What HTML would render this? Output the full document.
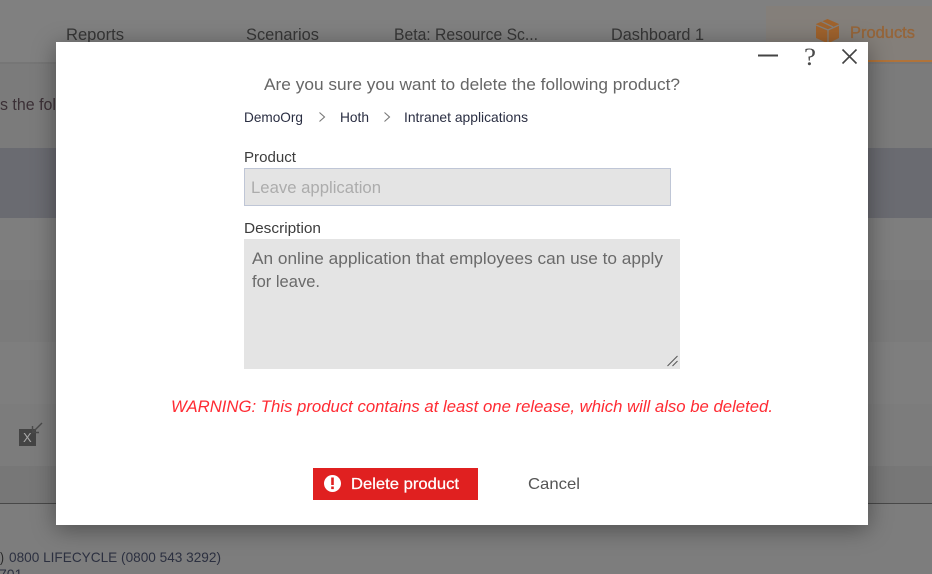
<!DOCTYPE html>
<html lang="en">
<head>
<meta charset="utf-8">
<title>Delete product</title>
<style>
html,body{margin:0;padding:0;width:932px;height:574px;overflow:hidden;background:#7e7e7e}
body{position:relative;font-family:"Liberation Sans",sans-serif}
.b{position:absolute;left:0;width:932px}
#modal{position:absolute;left:56px;top:42px;width:812px;height:483px;background:#fff;box-shadow:0 4px 22px rgba(0,0,0,.38)}
svg{position:absolute;left:0;top:0}
text{font-family:"Liberation Sans",sans-serif}
</style>
</head>
<body>
<div class="b" style="top:0;height:62px;background:#808080"></div>
<div class="b" style="top:62px;height:2px;background:#767676"></div>
<div class="b" style="top:64px;height:84px;background:#7b7b7b"></div>
<div class="b" style="top:148px;height:70px;background:#6a6b71"></div>
<div class="b" style="top:218px;height:62px;background:#7e7e7e"></div>
<div class="b" style="top:280px;height:62px;background:#7b7b7b"></div>
<div class="b" style="top:342px;height:62px;background:#7e7e7e"></div>
<div class="b" style="top:404px;height:62px;background:#7c7c7c"></div>
<div class="b" style="top:466px;height:37px;background:#777"></div>
<div class="b" style="top:503px;height:1px;background:#484848"></div>
<div class="b" style="top:504px;height:70px;background:#7d7d7d"></div>
<div style="position:absolute;left:766px;top:6px;width:166px;height:54px;background:#847f7a"></div>
<div style="position:absolute;left:766px;top:60px;width:166px;height:2px;background:#b0733a"></div>

<svg width="932" height="574" viewBox="0 0 932 574">
  <g fill="#363636" font-size="17">
    <text x="66" y="40" textLength="58" lengthAdjust="spacingAndGlyphs">Reports</text>
    <text x="246" y="40" textLength="73" lengthAdjust="spacingAndGlyphs">Scenarios</text>
    <text x="394" y="40" textLength="144" lengthAdjust="spacingAndGlyphs">Beta: Resource Sc...</text>
    <text x="611" y="40" textLength="93" lengthAdjust="spacingAndGlyphs">Dashboard 1</text>
  </g>
  <text x="850" y="38" font-size="17" fill="#966539" stroke="#966539" stroke-width=".35" textLength="65" lengthAdjust="spacingAndGlyphs">Products</text>
  <g>
    <path d="M827.500 19 L839 24 V38 L828 43.500 L816 38 V24 Z" fill="#a0632d"/>
    <path d="M816 25 L828 30 L839 25 M828 30 V43.500 M821.500 21.500 L833 27" stroke="#847f7a" stroke-width="1.300" fill="none"/>
  </g>
  <text x="0" y="110" font-size="17" fill="#3b3036" textLength="56" lengthAdjust="spacingAndGlyphs">s the fol</text>
  <rect x="19" y="429" width="17" height="17" fill="#444"/>
  <text x="23" y="442" font-size="13" fill="#a8a8a8">X</text>
  <path d="M42 423 L33 432 M32.500 426 V432.500 H39" stroke="#4a4a4a" stroke-width="1.400" fill="none"/>
  <text x="0" y="562" font-size="14" fill="#262626" textLength="4" lengthAdjust="spacingAndGlyphs">)</text>
  <text x="9" y="562" font-size="14" fill="#2c3040" textLength="212" lengthAdjust="spacingAndGlyphs">0800 LIFECYCLE (0800 543 3292)</text>
  <text x="-1" y="579" font-size="14" fill="#2c3040">701</text>
</svg>

<div id="modal"></div>

<svg width="932" height="574" viewBox="0 0 932 574">
  <path d="M758 55.500 H778" stroke="#444" stroke-width="2"/>
  <text x="804" y="65" font-size="25" fill="#4a4a4a" style="font-family:'Liberation Serif',serif" textLength="12" lengthAdjust="spacingAndGlyphs">?</text>
  <path d="M842.500 49.500 L856.500 63.500 M856.500 49.500 L842.500 63.500" stroke="#444" stroke-width="1.600" fill="none"/>

  <text x="264" y="90" font-size="17" fill="#666" textLength="416" lengthAdjust="spacingAndGlyphs">Are you sure you want to delete the following product?</text>

  <g font-size="14" fill="#2a2e42">
    <text x="244" y="122" textLength="59" lengthAdjust="spacingAndGlyphs">DemoOrg</text>
    <text x="340" y="122" textLength="29" lengthAdjust="spacingAndGlyphs">Hoth</text>
    <text x="404" y="122" textLength="124" lengthAdjust="spacingAndGlyphs">Intranet applications</text>
  </g>
  <path d="M319.500 112.500 L324.500 117 L319.500 121.500 M384.500 112.500 L389.500 117 L384.500 121.500" stroke="#777" stroke-width="1.100" fill="none"/>

  <text x="244" y="162" font-size="15" fill="#3d3d3d" textLength="52" lengthAdjust="spacingAndGlyphs">Product</text>
  <rect x="244.500" y="168.500" width="426" height="37" fill="#e4e4e4" stroke="#bfc6d6"/>
  <text x="251" y="193" font-size="17" fill="#acacac" textLength="130" lengthAdjust="spacingAndGlyphs">Leave application</text>

  <text x="244" y="233" font-size="15" fill="#3d3d3d" textLength="77" lengthAdjust="spacingAndGlyphs">Description</text>
  <rect x="244" y="239" width="436" height="130" fill="#e4e4e4"/>
  <text x="252" y="264" font-size="17" fill="#6a6a6a" textLength="411" lengthAdjust="spacingAndGlyphs">An online application that employees can use to apply</text>
  <text x="252" y="287" font-size="17" fill="#6a6a6a" textLength="68" lengthAdjust="spacingAndGlyphs">for leave.</text>
  <path d="M667.500 366 L677.500 356 M672.500 366 L677.500 361" stroke="#555" stroke-width="1" fill="none"/>

  <text x="171" y="412" font-size="17" font-style="italic" fill="#ff2b33" textLength="602" lengthAdjust="spacingAndGlyphs">WARNING: This product contains at least one release, which will also be deleted.</text>

  <rect x="313" y="468" width="165" height="32" fill="#e02020"/>
  <circle cx="332.500" cy="483.500" r="8.500" fill="#fff"/>
  <rect x="331.200" y="477.500" width="2.600" height="7.500" fill="#e02020"/>
  <rect x="331.200" y="486.500" width="2.600" height="2.600" fill="#e02020"/>
  <text x="351" y="489" font-size="16" fill="#fff" stroke="#fff" stroke-width=".25" textLength="108" lengthAdjust="spacingAndGlyphs">Delete product</text>
  <text x="528" y="489" font-size="16" fill="#555" textLength="52" lengthAdjust="spacingAndGlyphs">Cancel</text>
</svg>
</body>
</html>
